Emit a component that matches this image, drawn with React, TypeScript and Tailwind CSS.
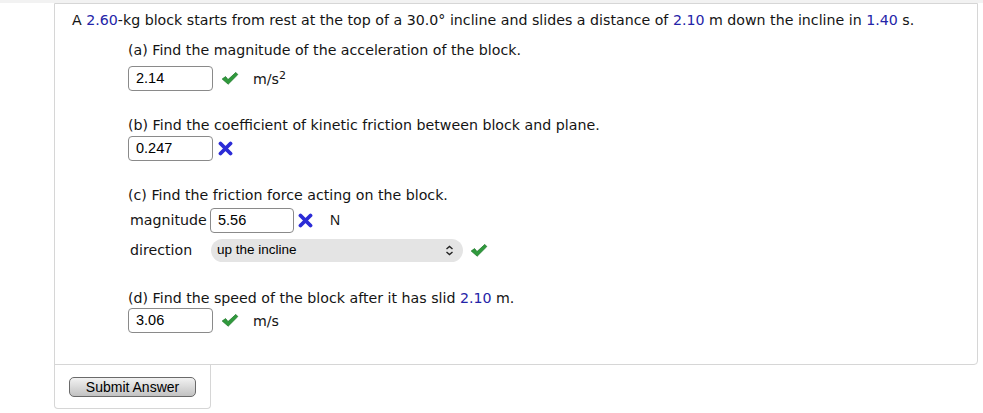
import React from "react";

function Check() {
  return (
    <svg width="18" height="15" viewBox="0 0 18 15" className="shrink-0">
      <path
        d="M1.2 8 L4.6 5.6 L7 8.6 L14.8 1.4 L16.8 3.6 L7.2 13.2 Z"
        fill="#2f9a3c"
        stroke="#237a2e"
        strokeWidth="0.8"
        strokeLinejoin="round"
      />
    </svg>
  );
}

function Cross() {
  return (
    <svg width="15" height="15" viewBox="0 0 15 15" className="shrink-0">
      <path
        d="M2.5 2.5 L12.5 12.5 M12.5 2.5 L2.5 12.5"
        stroke="#2b2bd6"
        strokeWidth="3.8"
        strokeLinecap="round"
      />
    </svg>
  );
}

function Box({ value, width = "w-[85px]" }: { value: string; width?: string }) {
  return (
    <div
      className={`${width} h-[25px] rounded-[4px] border border-[#8a8a8a] bg-white px-[7px] flex items-center font-['Liberation_Sans',Arial,sans-serif] text-[14.5px] text-black`}
    >
      {value}
    </div>
  );
}

const Num = ({ children }: { children: React.ReactNode }) => (
  <span className="text-[#2424a8]">{children}</span>
);

export default function App() {
  return (
    <div className="w-[983px] h-[413px] bg-white overflow-hidden font-['DejaVu_Sans',Verdana,sans-serif] text-[14.2px] text-[#141414]">
      <div className="h-[3px] bg-[#f2f2f2]" />
      <div className="ml-[54px] w-[924px] h-[362px] border border-[#d6d6d6] rounded-br-[4px] pl-[17px] pt-[6px]">
        <div className="h-[20px] leading-[20px] whitespace-nowrap">
          A <Num>2.60</Num>-kg block starts from rest at the top of a 30.0° incline and slides a distance of{" "}
          <Num>2.10</Num> m down the incline in <Num>1.40</Num> s.
        </div>

        <div className="ml-[56px]">
          {/* (a) */}
          <div className="mt-[10px] h-[20px] leading-[20px]">(a) Find the magnitude of the acceleration of the block.</div>
          <div className="mt-[6px] flex items-center">
            <Box value="2.14" />
            <div className="ml-[8px]">
              <Check />
            </div>
            <span className="ml-[14px] leading-[20px]">
              m/s<sup className="text-[11px] relative -top-[5px]">2</sup>
            </span>
          </div>

          {/* (b) */}
          <div className="mt-[24px] h-[20px] leading-[20px]">(b) Find the coefficient of kinetic friction between block and plane.</div>
          <div className="mt-[1px] flex items-center">
            <Box value="0.247" />
            <div className="ml-[5px]">
              <Cross />
            </div>
          </div>

          {/* (c) */}
          <div className="mt-[24px] h-[20px] leading-[20px]">(c) Find the friction force acting on the block.</div>
          <div className="mt-[3px] flex items-center pl-[2px]">
            <span className="w-[80px]">magnitude</span>
            <Box value="5.56" width="w-[84px]" />
            <div className="ml-[4px]">
              <Cross />
            </div>
            <span className="ml-[17px] font-['Liberation_Sans',Arial,sans-serif] text-[14px]">N</span>
          </div>
          <div className="mt-[6px] flex items-center pl-[2px]">
            <span className="w-[81px]">direction</span>
            <div className="w-[252px] h-[23px] rounded-full bg-[#e4e4e4] flex items-center justify-between pl-[6px] pr-[9px] font-['Liberation_Sans',Arial,sans-serif] text-[13.5px] text-black">
              <span>up the incline</span>
              <svg width="9" height="11" viewBox="0 0 9 11">
                <path d="M1.5 4 L4.5 1.5 L7.5 4 M1.5 7 L4.5 9.5 L7.5 7" stroke="#222" strokeWidth="1.4" fill="none" />
              </svg>
            </div>
            <div className="ml-[7px]">
              <Check />
            </div>
          </div>

          {/* (d) */}
          <div className="mt-[26px] h-[20px] leading-[20px]">
            (d) Find the speed of the block after it has slid <Num>2.10</Num> m.
          </div>
          <div className="flex items-center">
            <Box value="3.06" />
            <div className="ml-[8px]">
              <Check />
            </div>
            <span className="ml-[14px] leading-[20px]">m/s</span>
          </div>
        </div>
      </div>
      <div className="ml-[54px] w-[157px] h-[45px] -mt-px border border-t-0 border-[#d6d6d6] rounded-b-[4px] pl-[14px] pt-[13px]">
        <button className="w-[127px] h-[20px] rounded-[5px] border border-[#6a6a6a] bg-gradient-to-b from-[#f2f2f2] to-[#c2c2c2] font-['Liberation_Sans',Arial,sans-serif] text-[14px] leading-[18px] text-black">
          Submit Answer
        </button>
      </div>
    </div>
  );
}
